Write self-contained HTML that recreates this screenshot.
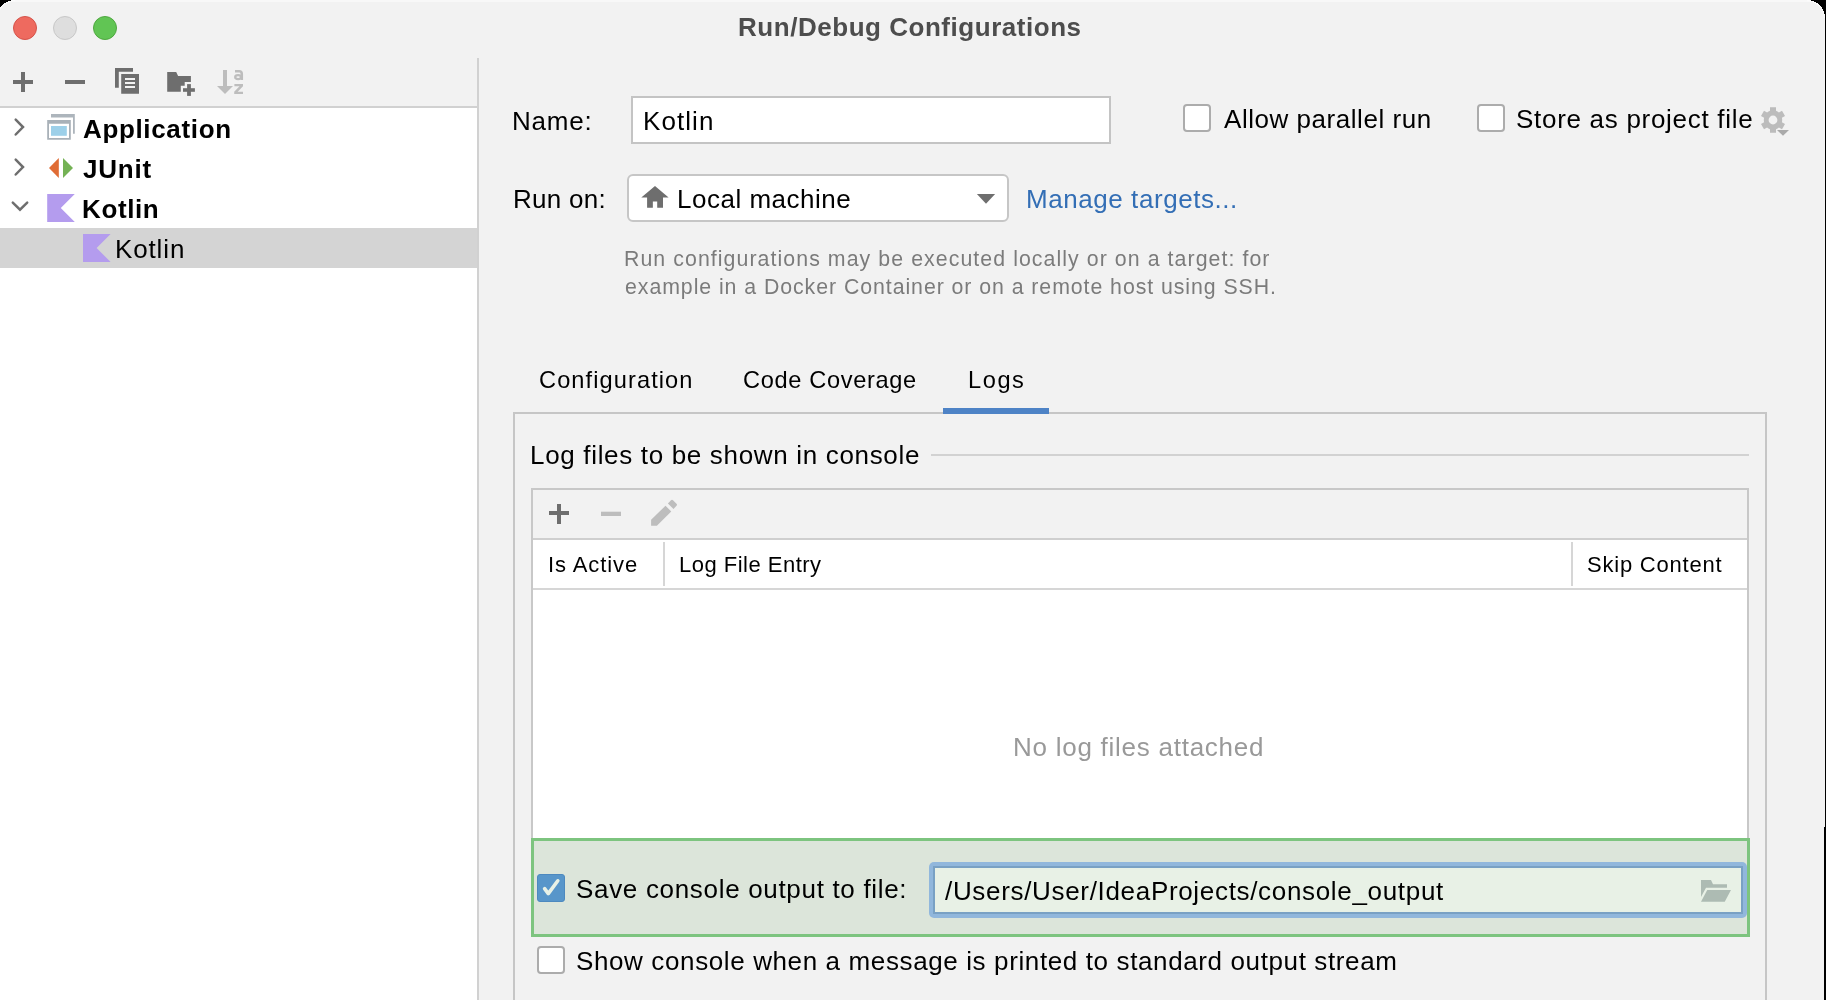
<!DOCTYPE html>
<html><head><meta charset="utf-8"><style>
html,body{margin:0;padding:0;}
body{width:1826px;height:1000px;overflow:hidden;background:#000;position:relative;font-family:"Liberation Sans",sans-serif;}
.t{position:absolute;white-space:pre;will-change:transform;font-family:"Liberation Sans",sans-serif;}
svg{position:absolute;overflow:visible;}
</style></head><body>
<div style="position:absolute;left:-3px;top:0px;width:1828px;height:1000px;background:#f2f2f2;box-shadow:inset 0 2px 0 rgba(255,255,255,0.45);"></div>
<svg style="left:0;top:0;z-index:5" width="1826" height="40"><path d="M15 0.6A17.4 17.4 0 0 0 -2.4 18M1807 0.6A17.4 17.4 0 0 1 1824.4 18" fill="none" stroke="#fbfbfb" stroke-width="1.2"/><path d="M-3 -1H15V0A18 18 0 0 0 -3 18Z" fill="#000" shape-rendering="crispEdges"/><path d="M1807 -1H1826V40H1825V18A18 18 0 0 0 1807 0Z" fill="#000" shape-rendering="crispEdges"/></svg>
<div style="position:absolute;left:1824px;top:827px;width:2px;height:173px;background:#000;"></div>
<svg style="left:13px;top:16px" width="24" height="24"><circle cx="12" cy="12" r="11.5" fill="#ee6a5f" stroke="#d5534a" stroke-width="1"/></svg>
<svg style="left:53px;top:16px" width="24" height="24"><circle cx="12" cy="12" r="11.5" fill="#dedede" stroke="#c8c8c8" stroke-width="1"/></svg>
<svg style="left:93px;top:16px" width="24" height="24"><circle cx="12" cy="12" r="11.5" fill="#61c554" stroke="#4fa840" stroke-width="1"/></svg>
<div class="t" style="left:738.0px;top:14.0px;font-size:26px;line-height:26px;font-weight:700;color:#4d4d4d;letter-spacing:0.535px;">Run/Debug Configurations</div>
<div style="position:absolute;left:0px;top:106px;width:477px;height:2px;background:#d1d1d1;"></div>
<div style="position:absolute;left:0px;top:108px;width:477px;height:892px;background:#fff;"></div>
<div style="position:absolute;left:477px;top:58px;width:2px;height:942px;background:#d1d1d1;"></div>
<div style="position:absolute;left:0px;top:228px;width:477px;height:40px;background:#d4d4d4;"></div>
<svg style="left:0;top:0" width="260" height="100"><rect x="13" y="80" width="20" height="4" fill="#6e6e6e"/><rect x="21" y="72" width="4" height="20" fill="#6e6e6e"/><rect x="65" y="80" width="20" height="4" fill="#6e6e6e"/><path d="M115 68H133V71.7H118.8V87.8H115Z" fill="#6e6e6e"/><path d="M121.2 74H139V93.7H121.2Z M125 78V80H135V78Z M125 82V84H135V82Z M125 86V88H135V86Z" fill="#6e6e6e" fill-rule="evenodd"/><path d="M167.2 72H176.2L178.1 76H190.9V82H184.7V85.7H180.8V91.8H167.2Z" fill="#6e6e6e"/><rect x="187.1" y="84.1" width="3.8" height="11.8" fill="#6e6e6e"/><rect x="183" y="88.2" width="11.9" height="3.6" fill="#6e6e6e"/><path d="M223 70H227V86H233L225 94L217 86H223Z" fill="#bdbdbd"/><path d="M235 71.3H239.2Q241.8 71.3 241.8 74V80" fill="none" stroke="#bdbdbd" stroke-width="2.5"/><ellipse cx="238.1" cy="77.1" rx="2.9" ry="2" fill="none" stroke="#bdbdbd" stroke-width="2.3"/><path d="M234.4 84H243V86.3L237.7 91.7H243V94H234.2V91.7L239.5 86.3H234.4Z" fill="#bdbdbd"/></svg>
<svg style="left:0;top:100px" width="120" height="170"><path d="M15.7 19.6L23 27L15.7 34.5M15.7 59.6L23 67L15.7 74.5M12.8 102.7L20 109.7L27.2 102.7" fill="none" stroke="#6e6e6e" stroke-width="2.5" stroke-linecap="round"/><path d="M51 14H74.8V33.8H73V17.6H51Z" fill="#adb5bc"/><path d="M47.2 20H70.8V39.8H47.2Z M49 23.8V38H69V23.8Z" fill="#a9b1b8" fill-rule="evenodd"/><rect x="51" y="26" width="15.8" height="9.8" fill="#9dd0e9"/><path d="M58.8 58V78L49 68Z" fill="#e06c35"/><path d="M63 58V78L73 68Z" fill="#74b255"/><path d="M47.2 94H74.8L60.8 108L74.8 122H47.2Z" fill="#b49cee"/><path d="M83 134H110.6L96.6 148L110.6 162H83Z" fill="#b49cee"/></svg>
<div class="t" style="left:83.0px;top:116.0px;font-size:26px;line-height:26px;font-weight:700;color:#000;letter-spacing:0.650px;">Application</div>
<div class="t" style="left:83.0px;top:156.0px;font-size:26px;line-height:26px;font-weight:700;color:#000;letter-spacing:0.800px;">JUnit</div>
<div class="t" style="left:82.0px;top:196.0px;font-size:26px;line-height:26px;font-weight:700;color:#000;letter-spacing:0.620px;">Kotlin</div>
<div class="t" style="left:114.6px;top:236.0px;font-size:26px;line-height:26px;font-weight:400;color:#000;letter-spacing:0.860px;">Kotlin</div>
<div class="t" style="left:512.0px;top:108.0px;font-size:26px;line-height:26px;font-weight:400;color:#000;letter-spacing:0.800px;">Name:</div>
<div style="position:absolute;left:631px;top:96px;width:480px;height:48px;box-sizing:border-box;background:#fff;border:2px solid #c4c4c4;border-radius:0;"></div>
<div class="t" style="left:642.5px;top:108.0px;font-size:26px;line-height:26px;font-weight:400;color:#000;letter-spacing:1.080px;">Kotlin</div>
<div style="position:absolute;left:1183px;top:104px;width:28px;height:28px;box-sizing:border-box;background:#fff;border:2px solid #acacac;border-radius:4px;"></div>
<div class="t" style="left:1224.0px;top:106.0px;font-size:26px;line-height:26px;font-weight:400;color:#000;letter-spacing:0.541px;">Allow parallel run</div>
<div style="position:absolute;left:1477px;top:104px;width:28px;height:28px;box-sizing:border-box;background:#fff;border:2px solid #acacac;border-radius:4px;"></div>
<div class="t" style="left:1516.0px;top:106.0px;font-size:26px;line-height:26px;font-weight:400;color:#000;letter-spacing:0.705px;">Store as project file</div>
<svg style="left:1755px;top:102px" width="40" height="40"><g transform="translate(18,18)" fill="#bcbcbc"><path fill-rule="evenodd" d="M-3 -12.8H3V-9.2A9.5 9.5 0 0 1 5.9 -7.5L9 -9.3L12 -4.1L8.9 -2.3A9.5 9.5 0 0 1 8.9 2.3L12 4.1L9 9.3L5.9 7.5A9.5 9.5 0 0 1 3 9.2V12.8H-3V9.2A9.5 9.5 0 0 1 -5.9 7.5L-9 9.3L-12 4.1L-8.9 2.3A9.5 9.5 0 0 1 -8.9 -2.3L-12 -4.1L-9 -9.3L-5.9 -7.5A9.5 9.5 0 0 1 -3 -9.2Z M4.4 0A4.4 4.4 0 1 0 -4.4 0A4.4 4.4 0 1 0 4.4 0Z"/></g><path d="M22 28H34L28 33.8Z" fill="#aaaaaa"/></svg>
<div class="t" style="left:512.5px;top:186.0px;font-size:26px;line-height:26px;font-weight:400;color:#000;letter-spacing:0.283px;">Run on:</div>
<div style="position:absolute;left:627px;top:174px;width:382px;height:48px;box-sizing:border-box;background:#fff;border:2px solid #c6c6c6;border-radius:6px;"></div>
<svg style="left:640px;top:184px" width="32" height="26"><path d="M1.3 13.5L15 2.1L28.6 13.5H23V23.8H17.2V17.5H12.85V23.8H7.1V13.5Z" fill="#6e6e6e"/></svg>
<div class="t" style="left:676.6px;top:186.0px;font-size:26px;line-height:26px;font-weight:400;color:#000;letter-spacing:0.500px;">Local machine</div>
<svg style="left:970px;top:190px" width="30" height="20"><path d="M6.9 3.9H25.1L16 13.7Z" fill="#6e6e6e"/></svg>
<div class="t" style="left:1026.3px;top:186.0px;font-size:26px;line-height:26px;font-weight:400;color:#336eb5;letter-spacing:0.562px;">Manage targets...</div>
<div class="t" style="left:624.4px;top:249.0px;font-size:21.3px;line-height:21.3px;font-weight:400;color:#7b7b7b;letter-spacing:1.072px;">Run configurations may be executed locally or on a target: for</div>
<div class="t" style="left:625.4px;top:277.0px;font-size:21.3px;line-height:21.3px;font-weight:400;color:#7b7b7b;letter-spacing:0.942px;">example in a Docker Container or on a remote host using SSH.</div>
<div class="t" style="left:539.0px;top:369.0px;font-size:23.6px;line-height:23.6px;font-weight:400;color:#000;letter-spacing:1.092px;">Configuration</div>
<div class="t" style="left:743.0px;top:369.0px;font-size:23.6px;line-height:23.6px;font-weight:400;color:#000;letter-spacing:0.658px;">Code Coverage</div>
<div class="t" style="left:968.0px;top:369.0px;font-size:23.6px;line-height:23.6px;font-weight:400;color:#000;letter-spacing:1.567px;">Logs</div>
<div style="position:absolute;left:513px;top:412px;width:1254px;height:598px;box-sizing:border-box;border:2px solid #c6c6c6;"></div>
<div style="position:absolute;left:943px;top:408px;width:106px;height:6px;background:#4e83c6;"></div>
<div class="t" style="left:530.0px;top:442.0px;font-size:26px;line-height:26px;font-weight:400;color:#000;letter-spacing:0.671px;">Log files to be shown in console</div>
<div style="position:absolute;left:931px;top:454px;width:818px;height:2px;background:#d2d2d2;"></div>
<div style="position:absolute;left:531px;top:488px;width:1218px;height:357px;box-sizing:border-box;border:2px solid #c8c8c8;background:#fff;"></div>
<div style="position:absolute;left:533px;top:490px;width:1214px;height:48px;background:#f2f2f2;"></div>
<div style="position:absolute;left:533px;top:538px;width:1214px;height:2px;background:#cfcfcf;"></div>
<div style="position:absolute;left:533px;top:588px;width:1214px;height:2px;background:#d6d6d6;"></div>
<div style="position:absolute;left:663px;top:542px;width:2px;height:44px;background:#d6d6d6;"></div>
<div style="position:absolute;left:1571px;top:542px;width:2px;height:44px;background:#d6d6d6;"></div>
<svg style="left:540px;top:495px" width="150" height="40"><rect x="9" y="16" width="20" height="4" fill="#6e6e6e"/><rect x="17" y="9" width="4" height="20" fill="#6e6e6e"/><rect x="61" y="16.7" width="20" height="4.3" fill="#bdbdbd"/><path d="M111.1 30.8V24.85L125.5 10.7L131.25 16.45L116.9 30.8Z M127.9 8.4L131 5.3Q132 4.3 133 5.3L136.5 8.8Q137.5 9.8 136.5 10.8L133.5 14Z" fill="#bdbdbd"/></svg>
<div class="t" style="left:548.4px;top:554.0px;font-size:22px;line-height:22px;font-weight:400;color:#000;letter-spacing:0.912px;">Is Active</div>
<div class="t" style="left:678.6px;top:554.0px;font-size:22px;line-height:22px;font-weight:400;color:#000;letter-spacing:0.492px;">Log File Entry</div>
<div class="t" style="left:1586.7px;top:554.0px;font-size:22px;line-height:22px;font-weight:400;color:#000;letter-spacing:0.782px;">Skip Content</div>
<div class="t" style="left:1012.6px;top:734.0px;font-size:26px;line-height:26px;font-weight:400;color:#999999;letter-spacing:0.745px;">No log files attached</div>
<div style="position:absolute;left:531px;top:838px;width:1219px;height:99px;box-sizing:border-box;border:3px solid #7dc47f;background:#dce5da;"></div>
<div style="position:absolute;left:537px;top:874px;width:28px;height:28px;box-sizing:border-box;background:#5896ca;border:1px solid #4d89bf;border-radius:3px;"></div>
<svg style="left:537px;top:874px" width="28" height="28"><path d="M7.6 14.6L11.3 19.6L20.8 6.8" fill="none" stroke="#e8f1e6" stroke-width="3.6" stroke-linecap="round" stroke-linejoin="round"/></svg>
<div class="t" style="left:576.3px;top:876.0px;font-size:26px;line-height:26px;font-weight:400;color:#000;letter-spacing:0.681px;">Save console output to file:</div>
<div style="position:absolute;left:929px;top:862px;width:818px;height:56px;box-sizing:border-box;background:#91b7dc;border-radius:5px;"></div>
<div style="position:absolute;left:933px;top:866px;width:810px;height:48px;box-sizing:border-box;background:#e8f1e6;border:2px solid #79a1c4;"></div>
<div class="t" style="left:945.0px;top:878.0px;font-size:26px;line-height:26px;font-weight:400;color:#000;letter-spacing:0.676px;">/Users/User/IdeaProjects/console_output</div>
<svg style="left:1690px;top:870px" width="50" height="40"><path d="M11 10H21L23 14.25H37V17.75H16L11 27Z" fill="#adbbb3"/><path d="M17.25 20H41L34.75 31.75H11Z" fill="#adbbb3"/></svg>
<div style="position:absolute;left:537px;top:946px;width:28px;height:28px;box-sizing:border-box;background:#fff;border:2px solid #acacac;border-radius:4px;"></div>
<div class="t" style="left:576.3px;top:948.0px;font-size:26px;line-height:26px;font-weight:400;color:#000;letter-spacing:0.619px;">Show console when a message is printed to standard output stream</div>
</body></html>
